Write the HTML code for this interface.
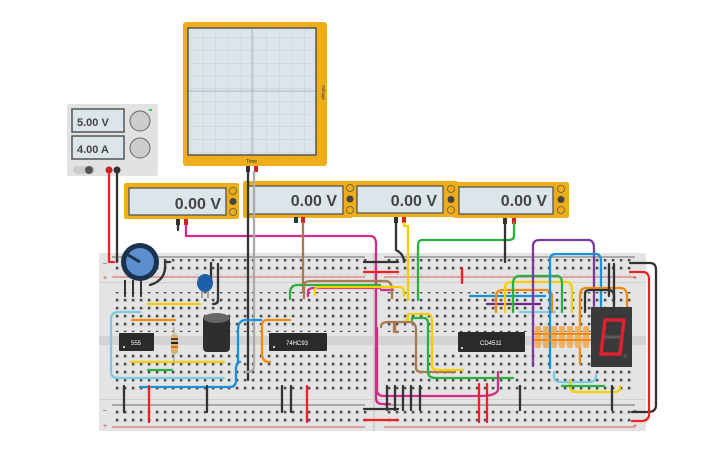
<!DOCTYPE html>
<html><head><style>
html,body{margin:0;padding:0;background:#fff;width:725px;height:453px;overflow:hidden}
svg{display:block}
text{font-family:"Liberation Sans",sans-serif}
</style></head><body>
<svg width="725" height="453" viewBox="0 0 725 453" xmlns="http://www.w3.org/2000/svg">
<defs>
<pattern id="h" x="113" y="0" width="8" height="8" patternUnits="userSpaceOnUse">
<rect x="2.8" y="2.8" width="2.6" height="2.6" fill="#4a4a4a"/></pattern>
<pattern id="g" width="12.7" height="12.7" patternUnits="userSpaceOnUse">
<path d="M12.7 0V12.7H0" fill="none" stroke="#b9c6cc" stroke-width="0.7"/></pattern>
</defs>

<rect x="99" y="253" width="547" height="178" fill="#e4e4e4" rx="2"/>
<line x1="374" y1="253" x2="374" y2="431" stroke="#cfcfcf" stroke-width="2"/>
<rect x="99" y="336" width="547" height="9" fill="#d3d3d3"/>
<rect x="99" y="282" width="547" height="1" fill="#d0d0d0"/>
<rect x="99" y="399" width="547" height="1" fill="#d0d0d0"/>
<line x1="112" y1="257" x2="365" y2="257" stroke="#444" stroke-width="0.8"/>
<line x1="112" y1="277" x2="365" y2="277" stroke="#c33" stroke-width="0.8"/>
<line x1="384" y1="257" x2="635" y2="257" stroke="#444" stroke-width="0.8"/>
<line x1="384" y1="277" x2="635" y2="277" stroke="#c33" stroke-width="0.8"/>
<line x1="112" y1="405" x2="365" y2="405" stroke="#444" stroke-width="0.8"/>
<line x1="112" y1="427" x2="365" y2="427" stroke="#c33" stroke-width="0.8"/>
<line x1="384" y1="405" x2="635" y2="405" stroke="#444" stroke-width="0.8"/>
<line x1="384" y1="427" x2="635" y2="427" stroke="#c33" stroke-width="0.8"/>
<rect x="112" y="259" width="256" height="16" fill="url(#h)"/>
<rect x="384" y="259" width="248" height="16" fill="url(#h)"/>
<rect x="112" y="292" width="256" height="40" fill="url(#h)"/>
<rect x="384" y="292" width="248" height="40" fill="url(#h)"/>
<rect x="112" y="350" width="256" height="40" fill="url(#h)"/>
<rect x="384" y="350" width="248" height="40" fill="url(#h)"/>
<rect x="112" y="408" width="256" height="16" fill="url(#h)"/>
<rect x="384" y="408" width="248" height="16" fill="url(#h)"/>
<g font-size="7" fill="#c33"><text x="103" y="280">+</text><text x="103" y="428">+</text><text x="633" y="280">+</text><text x="633" y="428">+</text></g>
<g font-size="7" fill="#555"><text x="103" y="265">–</text><text x="103" y="412">–</text><text x="633" y="265">–</text><text x="633" y="412">–</text></g>

<rect x="183" y="22" width="144" height="144" rx="3" fill="#f0ad1a"/>
<rect x="188" y="28" width="128" height="127" fill="#dce6ea" stroke="#555" stroke-width="1.5"/>
<rect x="189" y="29" width="126" height="125" fill="url(#g)"/>
<line x1="252" y1="29" x2="252" y2="154" stroke="#9aa8ae" stroke-width="0.8"/>
<line x1="189" y1="91" x2="315" y2="91" stroke="#9aa8ae" stroke-width="0.8"/>
<text x="246" y="163" font-size="5" fill="#333">Time</text>
<text x="322" y="85" font-size="4.5" fill="#333" transform="rotate(90 322 85)">Voltage</text>
<rect x="246" y="166" width="4" height="6" fill="#333"/><rect x="254" y="166" width="4" height="6" fill="#c22"/>

<rect x="67" y="104" width="91" height="72" rx="2" fill="#e2e2e2"/>
<rect x="72" y="109" width="52" height="23" fill="#dce6ea" stroke="#555" stroke-width="1.5"/>
<rect x="72" y="136" width="52" height="23" fill="#dce6ea" stroke="#555" stroke-width="1.5"/>
<text x="77" y="126" font-size="11" font-weight="bold" fill="#444">5.00 V</text>
<text x="77" y="153" font-size="11" font-weight="bold" fill="#444">4.00 A</text>
<circle cx="140" cy="121" r="10" fill="#ccc" stroke="#666" stroke-width="1"/>
<circle cx="140" cy="148" r="10" fill="#ccc" stroke="#666" stroke-width="1"/>
<rect x="149" y="109" width="3" height="2" fill="#2d2"/>
<rect x="73" y="166" width="22" height="8" rx="4" fill="#ccc"/><circle cx="89" cy="170" r="4" fill="#555"/>
<circle cx="109" cy="170" r="3.5" fill="#c22"/><circle cx="117" cy="170" r="3.5" fill="#333"/>

<g>
<rect x="124" y="183" width="115" height="36" rx="2" fill="#f0ad1a"/>
<rect x="129" y="188" width="97" height="27" fill="#dce6ea" stroke="#555" stroke-width="1.3"/>
<text x="221" y="209" font-size="16" font-weight="bold" fill="#444" text-anchor="end">0.00 V</text>
<rect x="243" y="181" width="110" height="37" rx="2" fill="#f0ad1a"/>
<rect x="248" y="186" width="95" height="28" fill="#dce6ea" stroke="#555" stroke-width="1.3"/>
<text x="337" y="206" font-size="16" font-weight="bold" fill="#444" text-anchor="end">0.00 V</text>
<rect x="345" y="181" width="113" height="36" rx="2" fill="#f0ad1a"/>
<rect x="357" y="186" width="86" height="27" fill="#dce6ea" stroke="#555" stroke-width="1.3"/>
<text x="437" y="206" font-size="16" font-weight="bold" fill="#444" text-anchor="end">0.00 V</text>
<rect x="453" y="182" width="116" height="36" rx="2" fill="#f0ad1a"/>
<rect x="459" y="187" width="94" height="27" fill="#dce6ea" stroke="#555" stroke-width="1.3"/>
<text x="547" y="206" font-size="16" font-weight="bold" fill="#444" text-anchor="end">0.00 V</text>
<g fill="none" stroke="#555" stroke-width="0.8">
<circle cx="233" cy="191" r="3.5"/><circle cx="233" cy="212" r="3.5"/>
<circle cx="350" cy="188" r="3.5"/><circle cx="350" cy="210" r="3.5"/>
<circle cx="451" cy="189" r="3.5"/><circle cx="451" cy="210" r="3.5"/>
<circle cx="561" cy="189" r="3.5"/><circle cx="561" cy="210" r="3.5"/></g>
<g fill="#444"><circle cx="233" cy="201.5" r="3.5"/><circle cx="350" cy="199" r="3.5"/><circle cx="451" cy="199.5" r="3.5"/><circle cx="561" cy="199.5" r="3.5"/></g>
<g fill="#333"><rect x="176" y="219" width="4" height="6"/><rect x="294" y="217" width="4" height="6"/><rect x="394" y="217" width="4" height="6"/><rect x="503" y="218" width="4" height="6"/></g>
<g fill="#c22"><rect x="184" y="219" width="4" height="6"/><rect x="301" y="217" width="4" height="6"/><rect x="402" y="217" width="4" height="6"/><rect x="512" y="218" width="4" height="6"/></g>
</g>

<g fill="none" stroke-width="2.3" stroke-linecap="round" stroke-linejoin="round">
<path d="M109 174V262H114" stroke="#e22"/>
<path d="M117 174V262" stroke="#333"/>
<path d="M178 225V230" stroke="#333"/>
<path d="M186 225V236H370Q376 236 376 244V398Q376 404 382 404H390" stroke="#d42a8a"/>
<path d="M381 290H393" stroke="#d42a8a"/>
<path d="M248 172V380" stroke="#333"/>
<path d="M254 172V366Q254 372 246 372" stroke="#aaa"/>
<path d="M303 223V292" stroke="#a87a50"/>
<path d="M396 223V250Q404 254 404 262" stroke="#333"/>
<path d="M404 223V226H408V300" stroke="#f5d000"/>
<path d="M514 223V236Q514 240 508 240H422Q418 240 418 246V300" stroke="#2bb040"/>
<path d="M505 223V262" stroke="#333"/>
<path d="M170 262H165Q167 280 150 285" stroke="#333"/>
<path d="M148 304H200" stroke="#f5d000"/>
<path d="M218 264V300Q218 304 213 304" stroke="#333"/>
<path d="M132 320H175" stroke="#f08a10"/>
<path d="M140 312H118Q111 312 111 320V372Q111 378 118 378H224" stroke="#7ccbe0"/>
<path d="M131 362H224" stroke="#f5d000"/>
<path d="M148 370H172" stroke="#2bb040"/>
<path d="M140 387H230Q236 387 236 380V370Q236 362 240 362H238V330Q238 320 246 320H261" stroke="#1a90d8"/>
<path d="M290 320H267Q262 320 262 326V354Q262 362 270 362" stroke="#f08a10"/>
<path d="M290 299V293Q290 285 298 285H380" stroke="#2bb040"/>
<path d="M308 296V292Q308 288 314 288H380" stroke="#d42a8a"/>
<path d="M304 298V285Q304 281 312 281H385Q392 281 392 290V298" stroke="#a87a50"/>
<path d="M315 295V290Q315 287 320 287H400Q404 287 404 293V296" stroke="#f5d000"/>
<path d="M381 327Q381 322 388 322H394V332" stroke="#a87a50"/>
<path d="M398 332H395V322H410Q416 322 416 330V368Q416 372 422 372H455" stroke="#a87a50"/>
<path d="M406 320H408V314H428Q432 314 432 322V365Q432 370 438 370H463" stroke="#f5d000"/>
<path d="M412 320V318H424Q428 318 428 324V372Q428 378 436 378H513" stroke="#2bb040"/>
<path d="M377 328V390Q377 396 384 396H480Q496 396 498 390V372" stroke="#d42a8a"/>
<path d="M470 296H545" stroke="#1a90d8"/>
<path d="M487 304H540" stroke="#6a2a8a"/>
<path d="M520 312H555" stroke="#7ccbe0"/>
<path d="M496 312V296Q496 290 504 290H545Q552 290 552 297V312" stroke="#f08a10"/>
<path d="M505 312V288Q505 282 512 282H566Q572 282 572 290V312" stroke="#f5d000"/>
<path d="M513 312V284Q513 276 520 276H557Q562 276 562 284V312" stroke="#2bb040"/>
<path d="M533 366V246Q533 240 540 240H588Q594 240 594 248V306" stroke="#7a3a9a"/>
<path d="M550 368V260Q550 254 556 254H596Q601 254 601 262V306" stroke="#1a90d8"/>
<path d="M580 364V296Q580 288 586 288H620Q627 288 627 296V306" stroke="#f08a10"/>
<path d="M585 312V294Q585 290 590 290H608Q614 290 614 296V306" stroke="#333"/>
<path d="M554 372V376Q554 382 560 382H590Q596 382 596 375" stroke="#7ccbe0"/>
<path d="M570 380V386Q570 392 576 392H616Q620 392 620 386" stroke="#f5d000"/>
<path d="M562 386H604" stroke="#2bb040"/>
<path d="M630 263H650Q656 263 656 270V405Q656 412 648 412H632" stroke="#333"/>
<path d="M630 272H643Q649 272 649 280V414Q649 421 641 421H632" stroke="#e22"/>
<path d="M462 268V283" stroke="#e22"/>
<path d="M609 264V296" stroke="#333"/><path d="M614 264V300" stroke="#333"/>
<path d="M612 386V410" stroke="#333"/>
<path d="M124 386V412M207 386V412M282 386V412M291 386V412M395 386V410M403 386V410M411 386V410M387 386V410M420 386V410M520 386V410" stroke="#333"/>
<path d="M149 386V422M307 386V422M479 384V422M487 384V422" stroke="#e22"/>
<path d="M364 262H398M364 409H398" stroke="#333"/>
<path d="M364 272H398M364 420H398" stroke="#e22"/>
<path d="M211 263V285" stroke="#333"/>
</g>

<circle cx="140" cy="262" r="19" fill="#1c3350"/>
<circle cx="140" cy="262" r="14" fill="#5b8fcf"/>
<line x1="140" y1="262" x2="128" y2="255" stroke="#1c3350" stroke-width="3"/>
<g stroke="#333" stroke-width="2"><line x1="125" y1="280" x2="125" y2="297"/><line x1="133" y1="280" x2="133" y2="297"/><line x1="141" y1="280" x2="141" y2="297"/></g>
<line x1="202" y1="290" x2="202" y2="298" stroke="#777" stroke-width="1.2"/><line x1="208" y1="290" x2="208" y2="298" stroke="#777" stroke-width="1.2"/>
<ellipse cx="205" cy="283" rx="8" ry="9" fill="#1d5fa8"/>
<rect x="119" y="333" width="35" height="18" rx="1" fill="#2a2a2a"/>
<text x="131" y="345" font-size="6" fill="#fff">555</text>
<circle cx="124" cy="347" r="1" fill="#fff"/>
<line x1="174" y1="327" x2="174" y2="362" stroke="#999" stroke-width="1"/>
<rect x="171" y="334" width="7" height="20" rx="3" fill="#d9b27a"/>
<rect x="171" y="338" width="7" height="2" fill="#5a3a20"/><rect x="171" y="342" width="7" height="2" fill="#222"/><rect x="171" y="346" width="7" height="2" fill="#e07010"/>
<rect x="203" y="315" width="27" height="37" rx="4" fill="#2e2e2e"/>
<ellipse cx="216.5" cy="318" rx="13" ry="5" fill="#666"/>
<rect x="269" y="333" width="58" height="18" rx="1" fill="#2a2a2a"/>
<text x="286" y="345" font-size="6" fill="#fff">74HC93</text>
<circle cx="274" cy="347" r="1" fill="#fff"/>
<rect x="458" y="332" width="67" height="20" rx="1" fill="#2a2a2a"/>
<text x="480" y="345" font-size="6" fill="#fff">CD4511</text>
<circle cx="462" cy="348" r="1" fill="#fff"/>
<g fill="#f0b060"><rect x="535" y="326" width="6" height="22" rx="2"/><rect x="543" y="326" width="6" height="22" rx="2"/><rect x="551" y="326" width="6" height="22" rx="2"/><rect x="559" y="326" width="6" height="22" rx="2"/><rect x="567" y="326" width="6" height="22" rx="2"/><rect x="575" y="326" width="6" height="22" rx="2"/><rect x="583" y="326" width="6" height="22" rx="2"/></g>
<rect x="534" y="333" width="57" height="2" fill="#f08a10"/><rect x="534" y="339" width="57" height="2" fill="#f08a10"/>
<rect x="591" y="307" width="41" height="60" fill="#3a3a3a"/>
<line x1="603" y1="337" x2="620" y2="337" stroke="#5a5a5a" stroke-width="3"/>
<path d="M605 320H624L620 354H601Z" fill="none" stroke="#e02030" stroke-width="3.5" stroke-linejoin="round"/>
<circle cx="625" cy="356" r="1.8" fill="#555"/>
</svg>
</body></html>
